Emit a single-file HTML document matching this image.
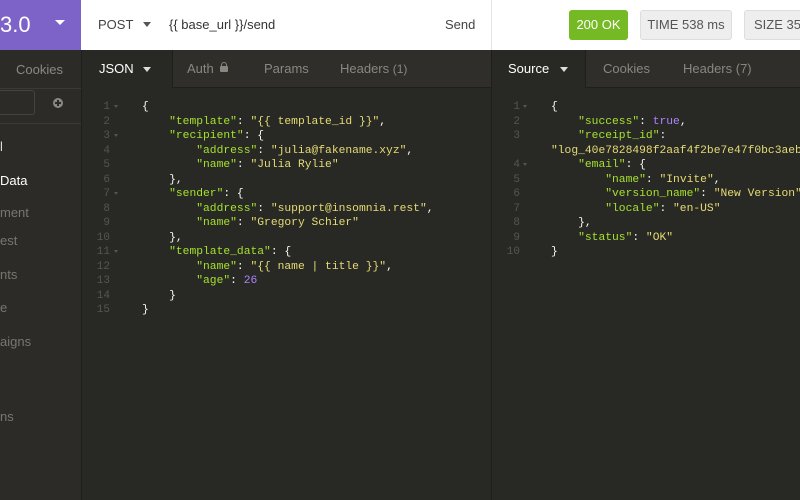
<!DOCTYPE html>
<html><head><style>
*{margin:0;padding:0;box-sizing:border-box}
body{width:800px;height:500px;overflow:hidden;background:#282925;font-family:"Liberation Sans",sans-serif;position:relative}
.a{position:absolute;white-space:pre}
.code{font-family:"Liberation Mono",monospace;font-size:11.3px;line-height:14.5px;color:#f8f8f2}
.k{color:#a6e22e}.s{color:#e6db74}.n{color:#ae81ff}
.ln{font-family:"Liberation Mono",monospace;font-size:11px;line-height:14.5px;color:#555550;text-align:right}
.f{position:absolute;width:0;height:0;border-left:2.5px solid transparent;border-right:2.5px solid transparent;border-top:3px solid #555550}
.side div{position:absolute;left:0;font-size:13px;color:#77776f}
</style></head><body>
<div class="a" style="left:0;top:0;width:81px;height:50px;background:#7d63c8"></div>
<div class="a" style="left:0;top:12px;font-size:22px;color:#fff">3.0</div>
<div class="a" style="left:55px;top:20px;width:0;height:0;border-left:5px solid transparent;border-right:5px solid transparent;border-top:5px solid #fff"></div>
<div class="a" style="left:81px;top:0;width:719px;height:50px;background:#fff"></div>
<div class="a" style="left:491px;top:0;width:1px;height:50px;background:#e4e4e4"></div>
<div class="a" style="left:98px;top:17px;font-size:13px;color:#444">POST</div>
<div class="a" style="left:143px;top:22px;width:0;height:0;border-left:4px solid transparent;border-right:4px solid transparent;border-top:5px solid #555"></div>
<div class="a" style="left:169px;top:17px;font-size:13px;color:#333">{{ base_url }}/send</div>
<div class="a" style="left:445px;top:17px;font-size:13px;color:#444">Send</div>
<div class="a" style="left:569px;top:10px;width:59px;height:30px;background:#75ba24;border-radius:3px;color:#fff;font-size:13px;line-height:30px;text-align:center">200 OK</div>
<div class="a" style="left:640px;top:10px;width:92px;height:30px;background:#eee;border:1px solid #ddd;border-radius:3px;color:#555;font-size:13px;line-height:28px;text-align:center">TIME 538 ms</div>
<div class="a" style="left:744px;top:10px;width:70px;height:30px;background:#eee;border:1px solid #ddd;border-radius:3px;color:#555;font-size:13px;line-height:28px;padding-left:9px">SIZE 358</div>
<div class="a" style="left:0;top:50px;width:81px;height:450px;background:#2c2b27"></div>
<div class="a" style="left:81px;top:50px;width:1px;height:450px;background:#1e1e1b"></div>
<div class="a" style="left:491px;top:50px;width:1px;height:450px;background:#1e1e1b"></div>
<div class="a" style="left:0;top:88px;width:81px;height:1px;background:#3a3935"></div>
<div class="a" style="left:16px;top:62px;font-size:13px;color:#8a8a83">Cookies</div>
<div class="a" style="left:-10px;top:90px;width:45px;height:25px;border:1px solid #44433e;border-radius:3px"></div>
<div class="a" style="left:53px;top:98px;width:10px;height:10px;border-radius:50%;background:#888"></div>
<div class="a" style="left:55px;top:102px;width:6px;height:2px;background:#2c2b27"></div>
<div class="a" style="left:57px;top:100px;width:2px;height:6px;background:#2c2b27"></div>
<div class="a" style="left:0;top:123px;width:81px;height:1px;background:#3a3935"></div>
<div class="side">
<div style="top:139px;color:#ddd">l</div>
<div style="top:173px;color:#fff">Data</div>
<div style="top:205px">ment</div>
<div style="top:233px">est</div>
<div style="top:267px">nts</div>
<div style="top:300px">e</div>
<div style="top:334px">aigns</div>
<div style="top:409px">ns</div>
</div>
<div class="a" style="left:172px;top:50px;width:319px;height:38px;background:#2f2e2a;border-left:1px solid #1e1e1b;border-bottom:1px solid #1e1e1b"></div>
<div class="a" style="left:99px;top:61px;font-size:13px;color:#fff">JSON</div>
<div class="a" style="left:143px;top:67px;width:0;height:0;border-left:4px solid transparent;border-right:4px solid transparent;border-top:5px solid #ddd"></div>
<div class="a" style="left:187px;top:61px;font-size:13px;color:#88887f">Auth</div>
<div class="a" style="left:220px;top:66px;width:8px;height:6px;background:#88887f;border-radius:1px"></div>
<div class="a" style="left:221px;top:62px;width:6px;height:6px;border:1.5px solid #88887f;border-radius:3px 3px 0 0"></div>
<div class="a" style="left:264px;top:61px;font-size:13px;color:#88887f">Params</div>
<div class="a" style="left:340px;top:61px;font-size:13px;color:#88887f">Headers <span style="font-size:12px">(1)</span></div>
<div class="a" style="left:585px;top:50px;width:215px;height:38px;background:#2f2e2a;border-left:1px solid #1e1e1b;border-bottom:1px solid #1e1e1b"></div>
<div class="a" style="left:508px;top:61px;font-size:13px;color:#fff">Source</div>
<div class="a" style="left:560px;top:67px;width:0;height:0;border-left:4px solid transparent;border-right:4px solid transparent;border-top:5px solid #ddd"></div>
<div class="a" style="left:603px;top:61px;font-size:13px;color:#88887f">Cookies</div>
<div class="a" style="left:683px;top:61px;font-size:13px;color:#88887f">Headers (7)</div>
<div class="a ln" style="left:90px;top:100px;width:20px">1
2
3
4
5
6
7
8
9
10
11
12
13
14
15</div>
<div class="f" style="left:114px;top:105px"></div>
<div class="f" style="left:114px;top:134px"></div>
<div class="f" style="left:114px;top:192px"></div>
<div class="f" style="left:114px;top:250px"></div>
<div class="a code" style="left:142px;top:100px">{
    <span class="k">"template"</span>: <span class="s">"{{ template_id }}"</span>,
    <span class="k">"recipient"</span>: {
        <span class="k">"address"</span>: <span class="s">"julia@fakename.xyz"</span>,
        <span class="k">"name"</span>: <span class="s">"Julia Rylie"</span>
    },
    <span class="k">"sender"</span>: {
        <span class="k">"address"</span>: <span class="s">"support@insomnia.rest"</span>,
        <span class="k">"name"</span>: <span class="s">"Gregory Schier"</span>
    },
    <span class="k">"template_data"</span>: {
        <span class="k">"name"</span>: <span class="s">"{{ name | title }}"</span>,
        <span class="k">"age"</span>: <span class="n">26</span>
    }
}</div>
<div class="a ln" style="left:500px;top:100px;width:20px">1
2
3

4
5
6
7
8
9
10</div>
<div class="f" style="left:523px;top:105px"></div>
<div class="f" style="left:523px;top:163px"></div>
<div class="a code" style="left:551px;top:100px">{
    <span class="k">"success"</span>: <span class="n">true</span>,
    <span class="k">"receipt_id"</span>:
<span class="s">"log_40e7828498f2aaf4f2be7e47f0bc3aeb</span>
    <span class="k">"email"</span>: {
        <span class="k">"name"</span>: <span class="s">"Invite"</span>,
        <span class="k">"version_name"</span>: <span class="s">"New Version"</span>
        <span class="k">"locale"</span>: <span class="s">"en-US"</span>
    },
    <span class="k">"status"</span>: <span class="s">"OK"</span>
}</div>
</body></html>
